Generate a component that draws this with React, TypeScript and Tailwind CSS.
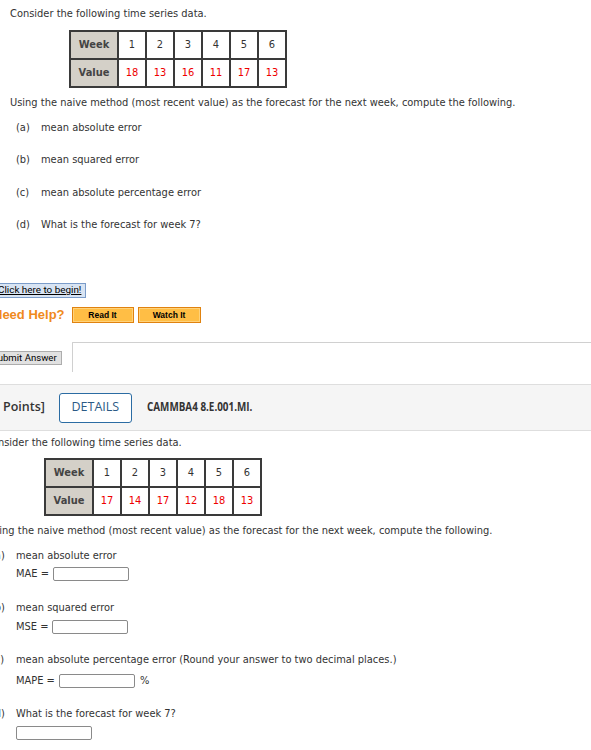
import React from "react";

const weeks = [1, 2, 3, 4, 5, 6];

function SeriesTable({ values }: { values: number[] }) {
  return (
    <div className="ml-[59px] inline-flex flex-col border-l-2 border-t-2 border-[#3a3a3a]">
      <div className="flex">
        <div className="w-[48px] h-[28px] flex items-center justify-center bg-[#d4d0c8] border-r-2 border-b-2 border-[#3a3a3a] font-bold text-[#444]">
          Week
        </div>
        {weeks.map((w) => (
          <div key={w} className="w-[28px] h-[28px] flex items-center justify-center border-r-2 border-b-2 border-[#3a3a3a] text-[#333]">
            {w}
          </div>
        ))}
      </div>
      <div className="flex">
        <div className="w-[48px] h-[28px] flex items-center justify-center bg-[#d4d0c8] border-r-2 border-b-2 border-[#3a3a3a] font-bold text-[#444]">
          Value
        </div>
        {values.map((v, i) => (
          <div key={i} className="w-[28px] h-[28px] flex items-center justify-center border-r-2 border-b-2 border-[#3a3a3a] text-[#ee0000]">
            {v}
          </div>
        ))}
      </div>
    </div>
  );
}

function Part({ label, text, className = "" }: { label: string; text: string; className?: string }) {
  return (
    <div className={`flex leading-[12px] ${className}`}>
      <span className="ml-[6px] w-[25px]">{label}</span>
      <span>{text}</span>
    </div>
  );
}

function AnswerBox({ name, className = "", suffix }: { name?: string; className?: string; suffix?: string }) {
  return (
    <div className={`ml-[31px] flex items-center h-[14px] ${className}`}>
      {name && <span className="mr-[4px]">{name} =</span>}
      <div className="w-[76px] h-[14px] border border-[#8a8a8a] rounded-[2px] bg-white"></div>
      {suffix && <span className="ml-[5px]">{suffix}</span>}
    </div>
  );
}

export default function App() {
  return (
    <div className="w-[591px] h-[750px] overflow-hidden bg-white text-[#333] font-['DejaVu_Sans',sans-serif] text-[9.9px]">
      {/* first question, read-only */}
      <div className="ml-[10px] pt-[8px]">
        <p className="leading-[12px]">Consider the following time series data.</p>
        <div className="mt-[10px]">
          <SeriesTable values={[18, 13, 16, 11, 17, 13]} />
        </div>
        <p className="mt-[9px] leading-[12px]">
          Using the naive method (most recent value) as the forecast for the next week, compute the following.
        </p>
        <Part className="mt-[13px]" label="(a)" text="mean absolute error" />
        <Part className="mt-[20px]" label="(b)" text="mean squared error" />
        <Part className="mt-[21px]" label="(c)" text="mean absolute percentage error" />
        <Part className="mt-[20px]" label="(d)" text="What is the forecast for week 7?" />
      </div>

      {/* begin / help / submit */}
      <div className="mt-[52px] font-['Roboto',Arial,sans-serif]">
        <button className="ml-[-7px] h-[15px] px-[4px] flex items-center whitespace-nowrap bg-[#d8e4f3] border border-[#7b9cc9] text-[9.9px] text-black underline">
          Click here to begin!
        </button>
        <div className="mt-[9px] flex items-center h-[16px] font-['Liberation_Sans',Arial,sans-serif]">
          <span className="ml-[-7px] text-[13px] font-bold text-[#f08a1c]">Need Help?</span>
          <button className="ml-[7px] w-[62px] h-[16px] bg-[#ffbe45] border border-[#e0820f] shadow-[inset_0_0_0_1px_#ffd27a] text-[8.5px] font-bold text-black">
            Read It
          </button>
          <button className="ml-[4px] w-[63px] h-[16px] bg-[#ffbe45] border border-[#e0820f] shadow-[inset_0_0_0_1px_#ffd27a] text-[8.5px] font-bold text-black">
            Watch It
          </button>
        </div>
        <div className="mt-[19px] flex items-start h-[30px]">
          <button className="mt-[9px] ml-[-13px] h-[14px] px-[4px] shrink-0 flex items-center whitespace-nowrap bg-[#e1e1e1] border border-[#adadad] text-[9.6px] text-black">
            Submit Answer
          </button>
          <div className="ml-[10px] flex-1 h-[30px] border-l border-t border-[#d0d0d0] rounded-tl-[1px]"></div>
        </div>
      </div>

      {/* question header */}
      <div className="mt-[12px] h-[47px] flex items-center bg-[#f5f5f5] border-t border-b border-[#dedede] font-['Open_Sans',sans-serif] text-[12.5px] text-[#333]">
        <span className="ml-[3px] font-semibold">Points]</span>
        <div className="ml-[14px] w-[73px] h-[30px] flex items-center justify-center bg-white border border-[#2b6ca3] rounded-[3px] text-[#2c5a85] text-[12.5px]">
          DETAILS
        </div>
        <span className="ml-[15px] inline-block whitespace-nowrap origin-left scale-x-[0.79] font-bold text-[12.5px]">
          CAMMBA4 8.E.001.MI.
        </span>
      </div>

      {/* second question, with answer boxes */}
      <div className="ml-[-15px] mt-[6px]">
        <p className="leading-[12px]">Consider the following time series data.</p>
        <div className="mt-[9px]">
          <SeriesTable values={[17, 14, 17, 12, 18, 13]} />
        </div>
        <p className="mt-[9px] ml-[2px] leading-[12px]">
          Using the naive method (most recent value) as the forecast for the next week, compute the following.
        </p>
        <Part className="mt-[13px]" label="(a)" text="mean absolute error" />
        <AnswerBox className="mt-[5px]" name="MAE" />
        <Part className="mt-[21px]" label="(b)" text="mean squared error" />
        <AnswerBox className="mt-[6px]" name="MSE" />
        <Part className="mt-[20px]" label="(c)" text="mean absolute percentage error (Round your answer to two decimal places.)" />
        <AnswerBox className="mt-[8px]" name="MAPE" suffix="%" />
        <Part className="mt-[20px]" label="(d)" text="What is the forecast for week 7?" />
        <AnswerBox className="mt-[6px]" />
      </div>
    </div>
  );
}
